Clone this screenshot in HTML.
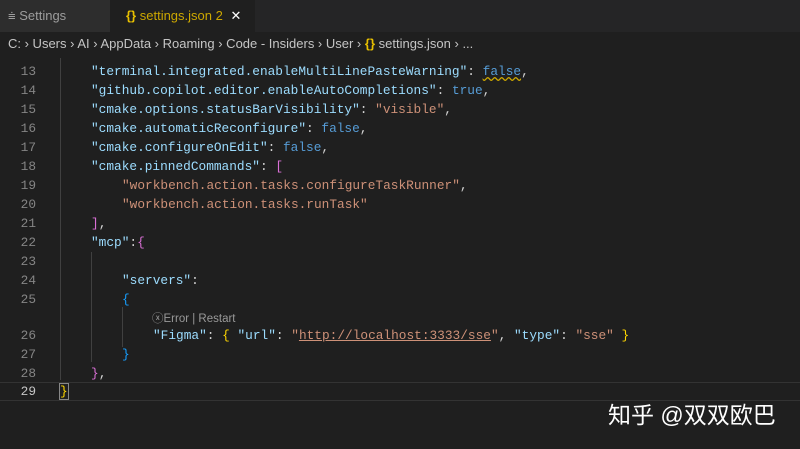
<!DOCTYPE html><html><head><meta charset="utf-8"><style>
body{margin:0;width:800px;height:449px;background:#1f1f1f;overflow:hidden;font-family:"Liberation Sans","Noto Sans CJK SC",sans-serif;position:relative}
.tabs{height:32px;background:#252526;position:relative}
.tab{position:absolute;top:0;height:32px;line-height:32px;font-size:13px}
.bc{position:absolute;top:32px;left:0;right:0;height:24px;line-height:24px;font-size:13px;color:#c5c5c5;padding-left:8px;background:#1f1f1f}
.ln{position:absolute;left:0;width:36px;text-align:right;font:12.8px "Liberation Mono",monospace;color:#858585}
.cd{position:absolute;left:60px;font:12.8px "Liberation Mono",monospace;white-space:pre;color:#d4d4d4}
.k{color:#9cdcfe}.s{color:#ce9178}.b{color:#569cd6}.y{color:#ffd700}.p{color:#da70d6}.bl{color:#179fff}
.g{position:absolute;width:1px;background:#404040}
.w{position:absolute;top:1px;left:0;right:0;bottom:0}
</style></head><body>
<div class="tabs">
<div class="tab" style="left:0;width:110px;background:#2d2d2d;color:#9d9d9d;padding-left:8px;box-sizing:border-box">⩧ Settings</div>
<div class="tab" style="left:110px;width:145px;background:#1f1f1f;color:#cca700;padding-left:16px;box-sizing:border-box"><b style="color:#e8c000">{}</b> settings.json 2 <span style="color:#fff;margin-left:4px">✕</span></div>
</div>
<div class="bc">C: › Users › AI › AppData › Roaming › Code - Insiders › User › <b style="color:#e8c000">{}</b> settings.json › ...</div>
<div style="position:absolute;left:0;right:0;top:382px;height:17px;border-top:1px solid #333;border-bottom:1px solid #333"></div>
<div class="g" style="left:60px;top:58px;height:322px"></div>
<div class="g" style="left:91px;top:252px;height:110px"></div>
<div class="g" style="left:122px;top:307px;height:40px"></div>
<div style="position:absolute;left:152px;top:310px;font-size:11.5px;color:#999">ⓧError | Restart</div>
<div class="w">
<div class="ln" style="top:63px">13</div><div class="cd" style="left:91px;top:63px"><span class="k">"terminal.integrated.enableMultiLinePasteWarning"</span>: <span class="b" style="text-decoration:underline wavy #cca700">false</span>,</div>
<div class="ln" style="top:82px">14</div><div class="cd" style="left:91px;top:82px"><span class="k">"github.copilot.editor.enableAutoCompletions"</span>: <span class="b">true</span>,</div>
<div class="ln" style="top:101px">15</div><div class="cd" style="left:91px;top:101px"><span class="k">"cmake.options.statusBarVisibility"</span>: <span class="s">"visible"</span>,</div>
<div class="ln" style="top:120px">16</div><div class="cd" style="left:91px;top:120px"><span class="k">"cmake.automaticReconfigure"</span>: <span class="b">false</span>,</div>
<div class="ln" style="top:139px">17</div><div class="cd" style="left:91px;top:139px"><span class="k">"cmake.configureOnEdit"</span>: <span class="b">false</span>,</div>
<div class="ln" style="top:158px">18</div><div class="cd" style="left:91px;top:158px"><span class="k">"cmake.pinnedCommands"</span>: <span class="p">[</span></div>
<div class="ln" style="top:177px">19</div><div class="cd" style="left:122px;top:177px"><span class="s">"workbench.action.tasks.configureTaskRunner"</span>,</div>
<div class="ln" style="top:196px">20</div><div class="cd" style="left:122px;top:196px"><span class="s">"workbench.action.tasks.runTask"</span></div>
<div class="ln" style="top:215px">21</div><div class="cd" style="left:91px;top:215px"><span class="p">]</span>,</div>
<div class="ln" style="top:234px">22</div><div class="cd" style="left:91px;top:234px"><span class="k">"mcp"</span>:<span class="p">{</span></div>
<div class="ln" style="top:253px">23</div>
<div class="ln" style="top:272px">24</div><div class="cd" style="left:122px;top:272px"><span class="k">"servers"</span>:</div>
<div class="ln" style="top:291px">25</div><div class="cd" style="left:122px;top:291px"><span class="bl">{</span></div>
<div class="ln" style="top:327px">26</div><div class="cd" style="left:153px;top:327px"><span class="k">"Figma"</span>: <span class="y">{</span> <span class="k">"url"</span>: <span class="s">"<u>http://localhost:3333/sse</u>"</span>, <span class="k">"type"</span>: <span class="s">"sse"</span> <span class="y">}</span></div>
<div class="ln" style="top:346px">27</div><div class="cd" style="left:122px;top:346px"><span class="bl">}</span></div>
<div class="ln" style="top:365px">28</div><div class="cd" style="left:91px;top:365px"><span class="p">}</span>,</div>
<div class="ln" style="top:383px;color:#c6c6c6">29</div><div class="cd" style="top:383px"><span class="y" style="outline:1px solid #888">}</span></div>
</div>
<div style="position:absolute;left:608px;top:396px;font-size:23px;color:#fff">知乎 @双双欧巴</div>
</body></html>
